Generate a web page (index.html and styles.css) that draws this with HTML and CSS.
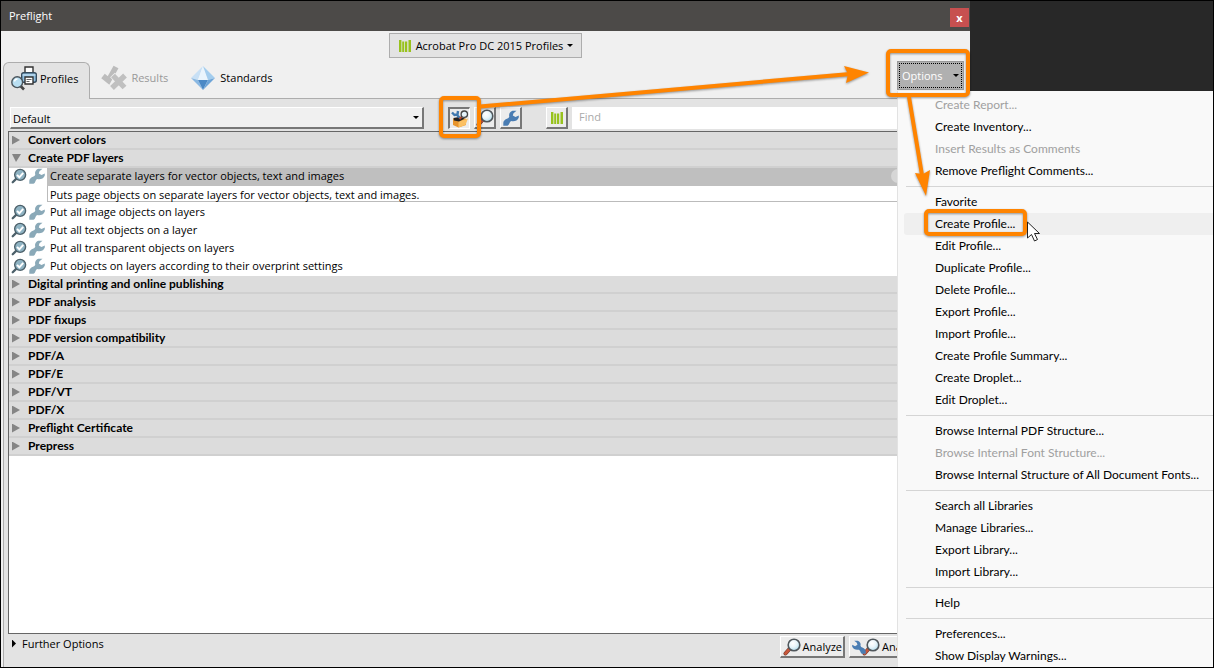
FILE: index.html
```html
<!DOCTYPE html>
<html lang="en">
<head>
<meta charset="utf-8">
<title>Preflight</title>
<link rel="stylesheet" href="styles.css">
</head>
<body>
<svg class="defs" aria-hidden="true">
  <defs>
    <radialGradient id="glass" cx="40%" cy="35%" r="70%"><stop offset="0" stop-color="#fff"/><stop offset=".5" stop-color="#e8f5fa"/><stop offset="1" stop-color="#a9d8ea"/></radialGradient>
    <symbol id="lens" viewBox="0 0 18 18"><path d="M6.500 11 2.500 15.500" stroke="#6b3a2e" stroke-width="4" stroke-linecap="round"/><path d="M6.500 11 2.500 15.500" stroke="#c9573b" stroke-width="2.800" stroke-linecap="round"/><circle cx="11" cy="7" r="5.800" fill="url(#glass)" stroke="#50575c" stroke-width="1.600"/></symbol>
    <symbol id="wrench" viewBox="0 0 16 16"><path d="M9.500.8C7 1.500 5.500 4 6.300 6.500L5.500 8C4 9 .5 9.500.3 13v2.800h4.200C6.500 15 6 12.500 8 11c3 .8 6.500 0 7.800-3.500v-2L12.500 7 9.800 5.500l.7-2.300 3-2.400Z" fill="currentColor"/></symbol>
    <symbol id="books" viewBox="0 0 14 14"><path d="M1 1h2.400v12H1zM4.200 2.500h2v10.500h-2zM7 2.500h2.200V13H7zM10.500 1h2.500v12h-2.500z" fill="#98c21d"/></symbol>
    <symbol id="check-lens" viewBox="0 0 14 14"><path d="M4.500 9.500 1.500 12.500" stroke="#4c606a" stroke-width="2" stroke-linecap="round"/><circle cx="8" cy="6" r="4.800" fill="#8fb3c3" stroke="#4c606a" stroke-width="1.200"/><path d="m5.300 6 2 2.200 3.400-4" fill="none" stroke="#fff" stroke-width="1.700"/></symbol>
  </defs>
</svg>
<div class="screen">
  <main class="window">
    <header class="titlebar"><h1>Preflight</h1><button class="close" aria-label="Close">x</button></header>
    <div class="library-row">
      <button class="library"><svg class="i14"><use href="#books"/></svg>Acrobat Pro DC 2015 Profiles<span class="caret"></span></button>
    </div>
    <nav class="tabs">
      <button class="tab active">
        <svg class="i26" viewBox="0 0 26 26"><path d="M14 1h8v7h-8z" fill="#fff" stroke="#333" stroke-width="1.400"/><rect x="10.700" y="6.700" width="14.600" height="9.600" rx="2" fill="#8fc0e2" stroke="#344a5c" stroke-width="1.400"/><path d="M11.500 9h13" stroke="#cfe6f5"/><path d="M14 11h8v7h-8z" fill="#fff" stroke="#333" stroke-width="1.400"/><path d="M15.500 13.500h5M15.500 15.500h3" stroke="#666"/><path d="m9.500 20 3.500 3.500" stroke="#444" stroke-width="2.600"/><circle cx="6.200" cy="16.200" r="5.400" fill="#b9dff2" stroke="#4b555c" stroke-width="1.400"/><path d="M3.500 15.500a3 3 0 0 1 3-2.500" fill="none" stroke="#fff" stroke-width="1.400"/></svg>
        Profiles</button>
      <button class="tab off" disabled>
        <svg class="i26" viewBox="0 0 26 26"><path d="m2 11 5.500 4.500L15 2" fill="none" stroke="#bcbcbc" stroke-width="5.600"/><path d="m11.500 10 12 13M24 10 11 23" stroke="#f0f0f0" stroke-width="6.400"/><path d="m12 10.500 11.500 12M24 10.500 11 23" stroke="#c0c0c0" stroke-width="5.400"/></svg>
        Results</button>
      <button class="tab">
        <svg class="i26" viewBox="0 0 26 26"><path d="M13 1 1 13l7 2z" fill="#c8e0f5"/><path d="M13 1 8 15h10z" fill="#eaf5fd"/><path d="M13 1l12 12-7 2z" fill="#a3cdee"/><path d="M1 13l7 2 5 10z" fill="#8ab8e2"/><path d="M8 15h10l-5 10z" fill="#4c89c5"/><path d="M25 13l-7 2-5 10z" fill="#6da4d8"/></svg>
        Standards</button>
    </nav>
    <section class="panel">
      <div class="toolbar">
        <div class="combo"><select aria-label="Profile group"><option>Default</option></select></div>
        <div class="tools">
          <button class="tool pressed" aria-label="Profiles"><svg class="i18" viewBox="0 0 18 18"><path d="M2 8.500h13V15l-7.500 2.500L2 15z" fill="#e8952c"/><path d="m7.500 11.500 9.500-3L14.500 15l-7 2.500z" fill="#fbc063"/><path d="M2.500 8 8 7l6 1.500-6 3-5-1z" fill="#222"/><path d="M1 2.500 3.500 5 6.500 4.500 7 1M5.500 4.500l4 4" fill="none" stroke="#3f78ae" stroke-width="2.400"/><path d="m11.500 6-3 3" stroke="#b5482f" stroke-width="2"/><circle cx="13.300" cy="4.200" r="3.200" fill="#e5f3fa" stroke="#444" stroke-width="1.300"/></svg></button>
          <button class="tool" aria-label="Checks"><svg class="i18"><use href="#lens"/></svg></button>
          <button class="tool blue" aria-label="Fixups"><svg class="i16"><use href="#wrench"/></svg></button>
        </div>
        <div class="search"><button class="tool" aria-label="Libraries"><svg class="i14"><use href="#books"/></svg></button><input type="text" placeholder="Find" aria-label="Find"></div>
      </div>
      <div class="list">
        <button class="group"><i class="tri"></i>Convert colors</button>
        <button class="group"><i class="tri open"></i>Create PDF layers</button>
        <div class="item selected"><svg class="i16"><use href="#check-lens"/></svg><svg class="i16 steel"><use href="#wrench"/></svg><span>Create separate layers for vector objects, text and images</span><i class="knob"></i></div>
        <div class="item detail"><span>Puts page objects on separate layers for vector objects, text and images.</span></div>
        <div class="item"><svg class="i16"><use href="#check-lens"/></svg><svg class="i16 steel"><use href="#wrench"/></svg><span>Put all image objects on layers</span></div>
        <div class="item"><svg class="i16"><use href="#check-lens"/></svg><svg class="i16 steel"><use href="#wrench"/></svg><span>Put all text objects on a layer</span></div>
        <div class="item"><svg class="i16"><use href="#check-lens"/></svg><svg class="i16 steel"><use href="#wrench"/></svg><span>Put all transparent objects on layers</span></div>
        <div class="item"><svg class="i16"><use href="#check-lens"/></svg><svg class="i16 steel"><use href="#wrench"/></svg><span>Put objects on layers according to their overprint settings</span></div>
        <button class="group"><i class="tri"></i>Digital printing and online publishing</button>
        <button class="group"><i class="tri"></i>PDF analysis</button>
        <button class="group"><i class="tri"></i>PDF fixups</button>
        <button class="group"><i class="tri"></i>PDF version compatibility</button>
        <button class="group"><i class="tri"></i>PDF/A</button>
        <button class="group"><i class="tri"></i>PDF/E</button>
        <button class="group"><i class="tri"></i>PDF/VT</button>
        <button class="group"><i class="tri"></i>PDF/X</button>
        <button class="group"><i class="tri"></i>Preflight Certificate</button>
        <button class="group"><i class="tri"></i>Prepress</button>
      </div>
      <footer class="footer">
        <button class="further"><i class="tri small"></i>Further Options</button>
        <div class="actions">
          <button class="action"><svg class="i18"><use href="#lens"/></svg>Analyze</button>
          <button class="action wide"><svg class="i14 blue flip"><use href="#wrench"/></svg><svg class="i18 tuck"><use href="#lens"/></svg>Ana</button>
        </div>
      </footer>
    </section>
  </main>
  <button class="options">Options<span class="caret"></span></button>
  <div class="menu" role="menu">
    <button disabled>Create Report...</button>
    <button>Create Inventory...</button>
    <button disabled>Insert Results as Comments</button>
    <button>Remove Preflight Comments...</button>
    <hr>
    <button>Favorite</button>
    <button class="hover">Create Profile...</button>
    <button>Edit Profile...</button>
    <button>Duplicate Profile...</button>
    <button>Delete Profile...</button>
    <button>Export Profile...</button>
    <button>Import Profile...</button>
    <button>Create Profile Summary...</button>
    <button>Create Droplet...</button>
    <button>Edit Droplet...</button>
    <hr>
    <button>Browse Internal PDF Structure...</button>
    <button disabled>Browse Internal Font Structure...</button>
    <button>Browse Internal Structure of All Document Fonts...</button>
    <hr>
    <button>Search all Libraries</button>
    <button>Manage Libraries...</button>
    <button>Export Library...</button>
    <button>Import Library...</button>
    <hr>
    <button>Help</button>
    <hr>
    <button>Preferences...</button>
    <button>Show Display Warnings...</button>
  </div>
  <svg class="marks" viewBox="0 0 1214 668" aria-hidden="true">
    <g class="callouts">
      <g fill="none" stroke="#ff8400" stroke-width="4">
        <rect x="441" y="98" width="38" height="38" rx="3"/>
        <rect x="888" y="51" width="80" height="44" rx="3"/>
        <rect x="926" y="211" width="99" height="23" rx="3"/>
        <path d="M480 106.500 850 74M909 97l13 78"/>
      </g>
      <path d="m869 72.500-25-6.500 4 8-2 9zM926 196l4-26-7 4-8-1z" fill="#ff8400"/>
    </g>
    <path d="M1027.500 222v16l4-3.500 3 6.500 3-1.500-3-6h5z" fill="#fff" stroke="#222"/>
  </svg>
</div>
</body>
</html>
```
FILE: styles.css
```css
* { box-sizing: border-box; }
body { margin: 0; font: 11px/16px "Open Sans", "Noto Sans", sans-serif; color: #000; }
button, input, select { font: inherit; color: inherit; }
button { border: 0; padding: 0; background: none; text-align: left; white-space: nowrap; }
.defs { position: absolute; width: 0; height: 0; }
svg { flex: none; display: block; fill: none; }
.i14 { width: 14px; height: 14px; }
.i16 { width: 16px; height: 16px; }
.i18 { width: 18px; height: 18px; }
.i26 { width: 26px; height: 26px; }
.blue { color: #4a7db3; }
.steel { color: #8aa9b8; }
.screen { position: relative; height: 100vh; overflow: hidden; background: #282828; border: 1px solid #000; }
.window { display: flex; flex-direction: column; height: 100%; width: calc(100% - 243px); background: #f0f0f0; }
.titlebar { display: flex; align-items: center; justify-content: space-between; height: 30px; padding: 0 1px 0 8px; background: #4c4a48; color: #fff; }
.titlebar h1 { margin: 0; font-size: 11px; font-weight: 400; }
.close { width: 19px; height: 19px; margin-top: 3px; background: #c75050; font-weight: 700; line-height: 16px; text-align: center; }
.library-row { display: flex; justify-content: center; padding-top: 2px; }
.library { display: flex; align-items: center; gap: 4px; height: 25px; padding: 0 8px; border: 1px solid #adadad; background: #e3e3e3; }
.caret { border: 3px solid transparent; border-top-color: #000; border-bottom: 0; }
.tabs { display: flex; height: 41px; padding: 4px 0 0 2px; }
.tab { display: flex; align-items: center; gap: 4px; height: 37px; padding: 0 11px 4px; border-bottom: 1px solid #adadad; }
.tab:last-child { flex: 1; }
.tab.active { gap: 3px; padding: 0 11px 4px 7px; border: 1px solid #adadad; border-bottom: 0; border-radius: 6px 6px 0 0; background: #e3e3e3; }
.tab.off { color: #999; }
.panel { display: flex; flex: 1; flex-direction: column; min-height: 0; margin-left: 2px; padding: 8px 0 0 4px; border-left: 1px solid #adadad; background: #e3e3e3; }
.toolbar { display: flex; height: 24px; padding-left: 2px; }
.combo { position: relative; width: 414px; height: 22px; border: 1px solid #fff; border-right: 2px solid #777; border-bottom: 2px solid #777; background: #f0f0f0; }
.combo select { display: block; appearance: none; width: 100%; height: 20px; padding: 1px 2px 0; border: 0; background: none; }
.combo::after { content: ""; position: absolute; top: 8px; right: 3px; border: 3px solid transparent; border-top-color: #000; border-bottom: 0; pointer-events: none; }
.tools { display: flex; gap: 4px; margin-left: 24px; }
.tool { display: grid; place-items: center; width: 22px; height: 22px; border: 1px solid #fff; border-right: 2px solid #777; border-bottom: 2px solid #777; background: #ececec; }
.tool.blue { color: #4a7db3; }
.tool.pressed { border: 1px solid #fff; border-left: 2px solid #777; border-top: 2px solid #777; }
.search { display: flex; flex: 1; gap: 4px; margin-left: 24px; }
.search input { flex: 1; min-width: 0; height: 22px; padding: 0 7px 4px; border: 0; background: #fff; }
.search input::placeholder { color: #aaa; }
.list { flex: 1; min-height: 0; border: 1px solid #666; background: #fff; }
.group { display: flex; align-items: center; width: 100%; height: 18px; padding-left: 3px; border-bottom: 2px solid #d0d0d0; background: #dcdcdc; font-family: Lato, "Open Sans", sans-serif; font-size: 12px; font-weight: 700; }
.tri { width: 16px; height: 9px; background: #858585; clip-path: polygon(0 0, 8px 50%, 0 100%); }
.tri.open { height: 8px; clip-path: polygon(0 0, 9px 0, 4px 100%); }
.item { display: flex; align-items: center; gap: 2px; height: 18px; padding: 0 0 2px 2px; }
.item span { padding-left: 3px; }
.item.selected { background: linear-gradient(90deg, #fff 38px, #bfbfbf 38px); }
.item.detail { padding: 0 0 2px 38px; align-items: flex-start; }
.item.detail span { flex: 1; height: 16px; padding-left: 2px; border-left: 1px solid #bbb; border-bottom: 1px solid #bbb; line-height: 18px; }
.knob { width: 14px; height: 14px; margin-left: auto; margin-right: 64px; border-radius: 7px; background: #d6d6d6; }
.footer { display: flex; justify-content: space-between; height: 33px; padding: 2px 4px 0 2px; }
.further { display: flex; align-items: center; height: 15px; }
.tri.small { width: 12px; height: 8px; background: #000; clip-path: polygon(2px 0, 6px 50%, 2px 100%); }
.actions { display: flex; gap: 4px; }
.action { display: flex; align-items: center; gap: 2px; height: 22px; padding: 0 1px 0 2px; border: 1px solid #fff; border-right: 2px solid #777; border-bottom: 2px solid #777; background: #ececec; }
.action.wide { width: 117px; }
.flip { transform: scaleX(-1); }
.tuck { margin-left: -6px; }
.options { position: absolute; top: 60px; right: 249px; display: flex; align-items: center; justify-content: space-between; width: 67px; height: 29px; padding: 2px 4px; border: 1px solid #999; background: #b0b0b0; color: #fff; outline: 1px dotted #000; outline-offset: -3px; }
.menu { position: absolute; top: 90px; right: 0; bottom: 0; width: 316px; padding: 3px 0 0 6px; border-left: 1px solid #e2e2e2; background: #f9f9f9; overflow: hidden; font-family: Lato, "Open Sans", sans-serif; font-size: 12px; }
.menu button { display: block; width: 100%; height: 22px; padding-left: 31px; }
.menu button:disabled { color: #a0a0a0; }
.menu .hover { background: #efefef; border-radius: 3px 0 0 3px; }
.menu hr { margin: 4px 0 4px 2px; border: 0; border-top: 1px solid #d5d5d5; }
.marks { position: absolute; top: -1px; left: -1px; width: 1214px; height: 668px; pointer-events: none; }
.callouts { filter: drop-shadow(0 1px 1px #0006); }
```
